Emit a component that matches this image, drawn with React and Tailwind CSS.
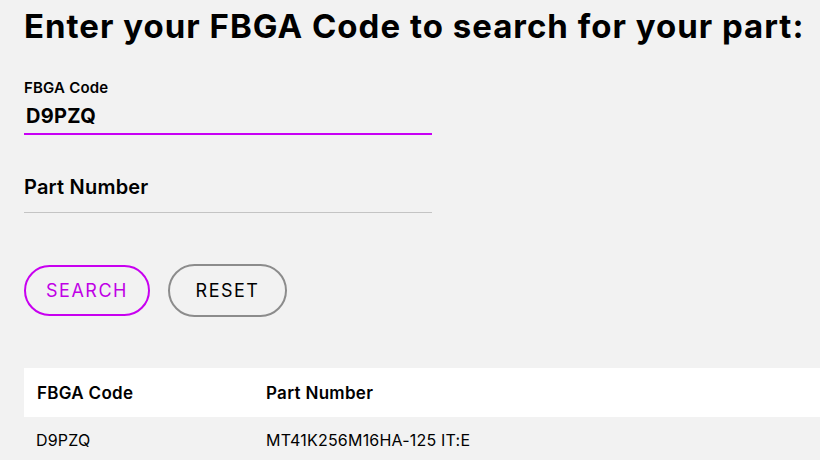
export default function App() {
  return (
    <div className="w-[820px] h-[460px] overflow-hidden bg-[#f2f2f2] text-black" style={{ fontFamily: "Inter, 'Liberation Sans', sans-serif" }}>
      <div className="pl-[24px] pt-[4px]">
        <h1 className="text-[33px] leading-[44px] font-bold tracking-[1px] whitespace-nowrap">Enter your FBGA Code to search for your part:</h1>
        <div className="w-[408px] mt-[31px]">
          <div className="text-[15px] leading-[18px] font-semibold tracking-[0.2px]">FBGA Code</div>
          <div className="text-[20px] leading-[26px] font-bold pl-[2px] mt-[6px] h-[30px] tracking-[0.3px]">D9PZQ</div>
          <div className="h-[1.5px] bg-[#c800f5]"></div>
          <div className="text-[20px] leading-[26px] font-semibold mt-[39px] h-[38px] tracking-[0.2px]">Part Number</div>
          <div className="h-px bg-[#c4c4c4]"></div>
        </div>
        <div className="flex gap-[18px] mt-[51px] items-center">
          <button className="w-[126px] h-[51px] rounded-full border-2 border-[#c800f0] text-[#c000e6] text-[18px] tracking-[1.5px]">SEARCH</button>
          <button className="w-[119px] h-[53px] rounded-full border-2 border-[#8c8c8c] text-black text-[18px] tracking-[1.5px]">RESET</button>
        </div>
        <div className="mt-[51px] bg-white h-[49px] flex items-center text-[17px] font-semibold tracking-[0.3px] pt-[3px]">
          <div className="w-[242px] pl-[13px]">FBGA Code</div>
          <div>Part Number</div>
        </div>
        <div className="h-[46px] flex items-center text-[16px] tracking-[0.2px]">
          <div className="w-[242px] pl-[12px]">D9PZQ</div>
          <div>MT41K256M16HA-125 IT:E</div>
        </div>
      </div>
    </div>
  );
}
